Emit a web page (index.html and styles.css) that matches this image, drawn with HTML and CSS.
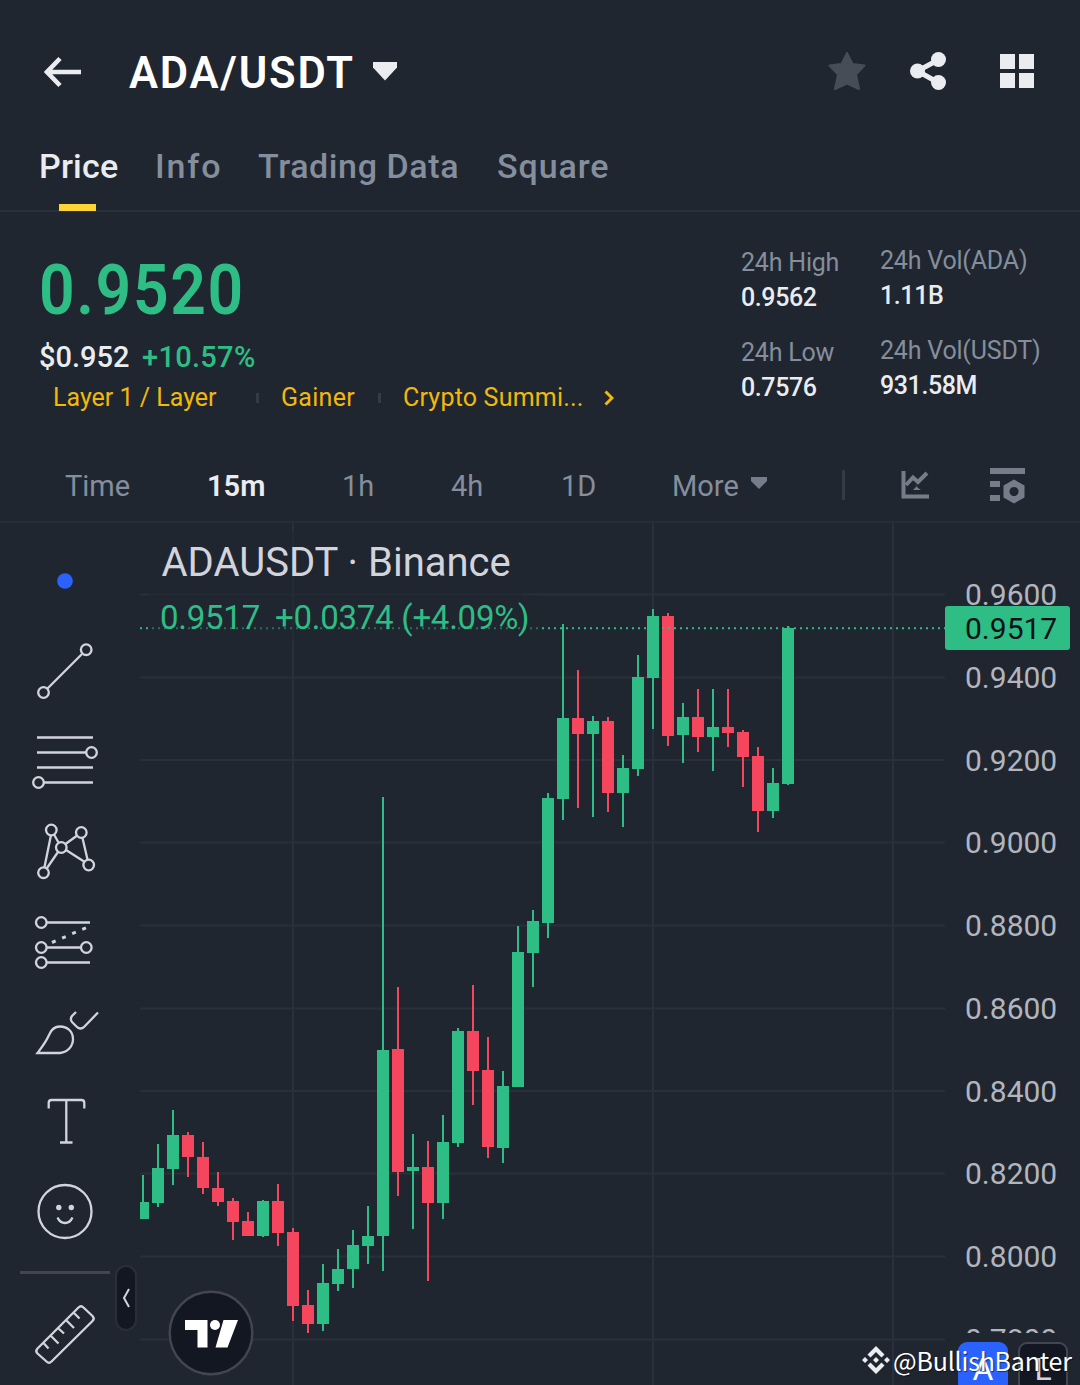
FILE: index.html
```html
<!DOCTYPE html>
<html lang="en">
<head>
<meta charset="utf-8">
<title>ADA/USDT</title>
<link rel="stylesheet" href="styles.css">
</head>
<body>
<div class="app">
  <header class="header">
    <svg class="back" width="38" height="32" viewBox="0 0 38 32"><path d="M16 2.500L3 16L16 29.500M3 16H37" fill="none" stroke="#eaecef" stroke-width="4.600"/></svg>
    <h1 class="pair">ADA/USDT</h1>
    <svg class="caret" width="24" height="19" viewBox="0 0 24 19"><path d="M0 0H24V5.500L12 18.500L0 5.500Z" fill="#eaecef"/></svg>
    <div class="actions">
      <svg width="38" height="40" viewBox="0 0 38 40"><path d="M19 2L24.500 13L36.500 14.500L28 23.500L31 38L19 32.500L7 38L10 23.500L1.500 14.500L13.500 13Z" fill="#474d57" stroke="#474d57" stroke-width="2" stroke-linejoin="round"/></svg>
      <svg width="38" height="40" viewBox="0 0 38 40"><path d="M29 9L8.500 20L29 31.500" fill="none" stroke="#eaecef" stroke-width="5"/><g fill="#eaecef"><circle cx="29.500" cy="8.500" r="7.500"/><circle cx="8.500" cy="20" r="7.500"/><circle cx="29.500" cy="31.500" r="7.500"/></g></svg>
      <svg width="34" height="34" viewBox="0 0 34 34"><path d="M0 0H15V15H0ZM19 0H34V15H19ZM0 19H15V34H0ZM19 19H34V34H19Z" fill="#eaecef"/></svg>
    </div>
  </header>
  <nav class="tabs">
    <span class="tab price active">Price</span>
    <span class="tab info">Info</span>
    <span class="tab trading">Trading Data</span>
    <span class="tab square">Square</span>
  </nav>
  <section class="ticker">
    <div class="quote">
      <div class="last">0.9520</div>
      <div class="change"><span class="usd">$0.952</span><span class="pct">+10.57%</span></div>
      <div class="tags">
        <span class="tag1">Layer 1 / Layer</span><i></i><span class="tag2">Gainer</span><i></i><span class="tag3">Crypto Summi...</span>
        <svg width="10" height="16" viewBox="0 0 10 16"><path d="M1.500 1.500L8 8L1.500 14.500" fill="none" stroke="#f0b90b" stroke-width="3"/></svg>
      </div>
    </div>
    <div class="stats high"><span class="label">24h High</span><span class="value">0.9562</span><span class="label">24h Low</span><span class="value">0.7576</span></div>
    <div class="stats vol"><span class="label">24h Vol(ADA)</span><span class="value">1.11B</span><span class="label">24h Vol(USDT)</span><span class="value">931.58M</span></div>
  </section>
  <nav class="frames">
    <span class="f1">Time</span><span class="f2">15m</span><span class="f3">1h</span><span class="f4">4h</span><span class="f5">1D</span><span class="f6">More</span>
    <svg class="more" width="16" height="12" viewBox="0 0 16 12"><path d="M0 0H16V4L8 12L0 4Z" fill="#767c89"/></svg>
    <i class="bar"></i>
    <svg class="ind" width="28" height="28" viewBox="0 0 28 28"><g fill="none" stroke="#767c89" stroke-width="4"><path d="M2.500 0V25.500H28"/><path d="M5 14L12 6.500L17 11L26 2"/></g><path d="M14 13L17 17L20 19H12L16 15Z" fill="#767c89"/></svg>
    <svg class="set" width="36" height="36" viewBox="0 0 36 36"><path d="M0 0H35V6H0ZM0 13H10V19H0ZM0 27H10V33H0Z" fill="#767c89"/><path fill-rule="evenodd" d="M24 11.500L34.500 17.500V29.500L24 35.500L13.500 29.500V17.500ZM24 19a4.500 4.500 0 1 0 .01 0Z" fill="#767c89"/></svg>
  </nav>
  <main class="chart">
    <aside class="tools">
      <svg viewBox="0 536 140 90"><circle cx="65" cy="581" r="7.800" fill="#2962ff"/></svg>
      <svg viewBox="0 626 140 90"><path d="M47.500 688.500L82 654"/><circle cx="43.500" cy="692.500" r="5.300"/><circle cx="86.200" cy="649.700" r="5.300"/></svg>
      <svg viewBox="0 716 140 90"><path d="M37 737.500H93M37 752.500H86M37 767.500H93M44 782.500H93"/><circle cx="91.500" cy="752.500" r="5.300"/><circle cx="38.500" cy="782.500" r="5.300"/></svg>
      <svg viewBox="0 806 140 90"><path d="M51 835L44.500 867M54 834.500L58.500 842.500M58 852L47 868M65.500 844L76.500 836M66 850L84 861.500M82.500 838L87.500 859.500"/><circle cx="51.300" cy="830" r="5.300"/><circle cx="81.300" cy="832.500" r="5.300"/><circle cx="61.300" cy="847.500" r="5.300"/><circle cx="43.500" cy="872.700" r="5.300"/><circle cx="88.700" cy="865" r="5.300"/></svg>
      <svg viewBox="0 896 140 90"><path d="M47 922.500H90M47 947.500H81M47 962.500H90"/><path d="M52 942.500L90 926" stroke-dasharray="4 7" stroke-width="3"/><circle cx="41.300" cy="922.500" r="5.300"/><circle cx="41.300" cy="947.500" r="5.300"/><circle cx="86.300" cy="947.500" r="5.300"/><circle cx="41.300" cy="962.500" r="5.300"/></svg>
      <svg viewBox="0 986 140 90"><path d="M37.500 1053H60C68 1052 73 1046 73 1039C73 1031 67 1026.500 60 1026.500C54 1026.500 51 1030 49 1035C46 1042 42 1047 37.500 1053Z"/><path d="M76 1012L72 1016C70.500 1018 70.500 1020 72 1022L77 1027C79 1029 82 1029 84 1027L98 1012.500"/></svg>
      <svg viewBox="0 1076 140 90"><path d="M48.700 1108.500V1103Q48.700 1100 51.500 1100H81.500Q84.300 1100 84.300 1103V1108.500M66.300 1100V1142.500M60 1142.500H72.500"/></svg>
      <svg viewBox="0 1166 140 90"><circle cx="65" cy="1211.500" r="26.500"/><path d="M57.500 1217.500Q60 1223 65 1223Q70 1223 72.500 1217.500"/><g fill="#d1d4dc" stroke="none"><circle cx="58.800" cy="1207.500" r="2.700"/><circle cx="71.300" cy="1207.500" r="2.700"/></g></svg>
      <hr>
      <svg viewBox="0 1289 140 90"><path d="M37.500 1348.500L78.500 1307.500Q81 1305 83.500 1307.500L92.500 1316Q95 1318.500 92.500 1321L51.500 1361.500Q49 1364 46.500 1361.500L37.500 1353.500Q35 1351 37.500 1348.500ZM43.500 1343L48.500 1348.500M51 1336L58.500 1343.500M58.500 1328.500L64 1333.500M66.500 1320.500L74 1328M74 1313L79.500 1318.500"/></svg>
      <button class="collapse"><svg width="8" height="20" viewBox="0 0 8 20"><path d="M7 1L2 10L7 19" fill="none" stroke="#d1d4dc" stroke-width="2"/></svg></button>
    </aside>
    <div class="plot">
      <svg viewBox="140 523 805 862" width="805" height="862">
        <path class="grid" d="M140 594.500H945M140 677.500H945M140 760H945M140 842.500H945M140 925.500H945M140 1008.500H945M140 1091H945M140 1173.500H945M140 1256.500H945M140 1339.500H945M293 523V1385M653 523V1385M893 523V1385"/>
        <path class="up wick" d="M143 1175V1219M158 1144V1207M173 1110V1185M263 1200V1237M323 1264V1331M338 1249V1291M353 1230V1288M368 1206V1264M383 797V1271M413 1134V1229M443 1115V1219M458 1028V1147M503 1071V1163M518 926V1087M533 910V987M548 793V938M563 624V820M593 716V817M623 755V827M638 655V776M653 609V729M683 703V763M713 689V771M773 768V818M788 626V785"/>
        <path class="up body" d="M143 1202V1219M158 1168V1203M173 1135V1169M263 1201V1236M323 1283V1324M338 1269V1284M353 1245V1269M368 1236V1246M383 1050V1236M413 1167V1171M443 1142V1203M458 1031V1143M503 1086V1148M518 952V1087M533 921V953M548 798V923M563 718V799M593 721V734M623 768V793M638 677V769M653 616V678M683 717V735M713 727V737M773 783V811M788 628V784"/>
        <path class="down wick" d="M188 1132V1177M203 1142V1194M218 1172V1206M233 1198V1240M248 1212V1236M278 1184V1246M293 1228V1321M308 1290V1333M398 987V1196M428 1141V1281M473 985V1105M488 1037V1158M578 670V808M608 717V812M668 613V746M698 689V752M728 689V747M743 730V787M758 747V832"/>
        <path class="down body" d="M188 1135V1157M203 1157V1188M218 1188V1202M233 1201V1222M248 1221V1236M278 1201V1233M293 1232V1306M308 1305V1324M398 1049V1172M428 1167V1203M473 1031V1071M488 1070V1147M578 718V734M608 721V793M668 616V736M698 717V737M728 727V733M743 732V757M758 756V811"/>
        <path class="lastline" d="M140 628.300H945"/>
      </svg>
      <div class="legend"><div class="symbol">ADAUSDT · Binance</div><div class="delta"><span class="d1">0.9517</span><span class="d2">+0.0374 (+4.09%)</span></div></div>
      <svg class="tv" width="86" height="86" viewBox="0 0 86 86"><circle cx="43" cy="43" r="41.300" fill="#131722" stroke="#434651" stroke-width="2.400"/><path d="M17 30H39.500V57.500H29.500V40H17ZM55.500 30H70L59.500 57.500H47.500Z" fill="#fff"/><circle cx="47" cy="35" r="5" fill="#fff"/></svg>
    </div>
    <div class="axis">
      <div class="scale"><span>0.9600</span><span>0.9400</span><span>0.9200</span><span>0.9000</span><span>0.8800</span><span>0.8600</span><span>0.8400</span><span>0.8200</span><span>0.8000</span><span>0.7800</span></div>
      <div class="marker">0.9517</div>
      <div class="mode auto">A</div><div class="mode log">L</div>
    </div>
  </main>
  <div class="credit"><svg width="28" height="28" viewBox="0 0 28 28"><path fill="#eaecef" d="M14 0L22.500 8.500L19.500 11.500L14 6L8.500 11.500L5.500 8.500ZM14 28L5.500 19.500L8.500 16.500L14 22L19.500 16.500L22.500 19.500ZM14 11L17 14L14 17L11 14ZM3 11L6 14L3 17L0 14ZM25 11L28 14L25 17L22 14Z"/></svg><span>@BullishBanter</span></div>
</div>
</body>
</html>
```
FILE: styles.css
```css
* { box-sizing: border-box; }
body { margin: 0; background: #202630; font-family: Roboto, sans-serif; color: #eaecef; }
.app { position: relative; width: 1080px; height: 1385px; overflow: hidden; white-space: nowrap; }
svg { display: block; flex: none; }

.header { display: flex; align-items: center; height: 146px; padding: 0 46px 0 44px; }
.back { margin-top: -2px; }
.pair { margin: 0 0 0 47px; width: 225px; font-size: 43.5px; font-weight: 600; letter-spacing: 1.8px; color: #fff; }
.caret { margin: -4px 0 0 19px; }
.actions { display: flex; align-items: center; gap: 43px; margin: -4px 0 0 auto; }
.actions svg:last-child { margin-left: 10px; }

.tabs { display: flex; height: 66px; padding-left: 39px; border-bottom: 2px solid #2b313a; font-size: 34px; line-height: 40px; font-weight: 500; color: #848e9c; }
.price { width: 116px; letter-spacing: 0.2px; }
.info { width: 103px; letter-spacing: 1.9px; }
.trading { width: 239px; letter-spacing: 0.6px; }
.square { letter-spacing: 0.9px; }
.tab.active { position: relative; color: #eaecef; }
.tab.active::after { content: ""; position: absolute; left: 20px; top: 58px; width: 37px; height: 7px; background: #fcd535; }

.ticker { display: flex; height: 238px; }
.quote { width: 741px; padding: 38px 0 0 39px; }
.last { font-size: 71px; line-height: 80px; font-weight: 600; letter-spacing: 1.8px; color: #2ebd85; transform: scaleX(0.88); transform-origin: left; }
.change { display: flex; margin-top: 7px; font-size: 29px; line-height: 40px; font-weight: 500; }
.usd { width: 103px; }
.pct { color: #2ebd85; letter-spacing: 0.3px; }
.tags { display: flex; align-items: center; padding: 1px 0 0 14px; font-size: 25px; line-height: 40px; color: #f0b90b; }
.tags i { width: 3px; height: 10px; margin-right: 22px; background: #333b47; }
.tag1 { width: 203px; }
.tag2 { width: 97px; letter-spacing: 0.3px; }
.tag3 { width: 201px; letter-spacing: 0.2px; }
.stats { display: flex; flex-direction: column; font-size: 25px; line-height: 35px; letter-spacing: -0.2px; }
.high { width: 139px; padding-top: 33px; }
.vol { padding-top: 31px; }
.label { color: #848e9c; }
.value { font-weight: 500; margin-bottom: 20px; letter-spacing: -0.4px; }

.frames { display: flex; align-items: center; height: 73px; padding: 1px 0 0 65px; font-size: 29px; color: #848e9c; border-bottom: 2px solid #272d37; }
.f1 { width: 142px; }
.f2 { width: 135px; font-weight: 600; color: #eaecef; }
.f3 { width: 109px; }
.f4 { width: 110px; }
.f5 { width: 111px; }
.f6 { width: 79px; }
.more { margin-top: -6px; }
.bar { width: 3px; height: 30px; margin: -3px 56px 0 75px; background: #333b47; }
.ind { margin-top: -3px; }
.set { margin: -1px 0 0 61px; }

.chart { display: flex; height: 862px; }
.tools { position: relative; width: 140px; padding-top: 13px; }
.tools > svg { width: 140px; height: 90px; fill: none; stroke: #d1d4dc; stroke-width: 2.3; }
.tools > svg:first-child { stroke: none; }
.tools hr { width: 90px; height: 3px; margin: 15px 0 15px 20px; border: 0; background: #434651; }
.collapse { position: absolute; left: 115px; top: 742px; width: 22px; height: 66px; padding: 0; border: 2px solid #2a2e39; border-radius: 11px; background: #131722; display: grid; place-items: center; }
.plot { position: relative; width: 805px; }
.grid { fill: none; stroke: #2a303b; stroke-width: 2; }
.up { stroke: #2ebd85; }
.down { stroke: #f6465d; }
.wick { stroke-width: 2; }
.body { stroke-width: 12; }
.lastline { stroke: #2ebd85; stroke-width: 2; stroke-dasharray: 2 4; }
.legend { position: absolute; left: 9px; top: 8px; color: #d1d4dc; }
.symbol { width: 373px; padding: 6px 0 6px 12.5px; font-size: 40px; line-height: 52px; background: #20263080; }
.delta { display: flex; width: 392px; padding-left: 11px; font-size: 33px; line-height: 46px; letter-spacing: -0.25px; color: #2ebd85; background: #20263080; }
.d1 { width: 115px; }
.tv { position: absolute; left: 28px; top: 767px; }
.axis { position: relative; width: 135px; color: #b2b5be; }
.scale { display: flex; flex-direction: column; height: 810px; padding: 31px 0 0 20px; overflow: hidden; font-size: 30px; line-height: 82.75px; }
.marker { position: absolute; left: 0; top: 83px; width: 125px; height: 44px; padding-left: 20px; border-radius: 3px; background: #2ebd85; color: #0d1117; font-size: 30px; line-height: 46px; }
.mode { position: absolute; top: 819px; width: 50px; height: 50px; border-radius: 9px; font-size: 32px; line-height: 54px; text-align: center; color: #fff; }
.auto { left: 13px; background: #2962ff; }
.log { left: 73px; border: 2px solid #434651; background: #131722; color: #d1d4dc; line-height: 50px; }
.credit { position: absolute; left: 862px; top: 1343px; display: flex; align-items: center; gap: 3px; color: #fff; font: 25px/34px "Noto Sans CJK SC", sans-serif; letter-spacing: -0.2px; text-shadow: 1px 1px 1px #0008; }
```
